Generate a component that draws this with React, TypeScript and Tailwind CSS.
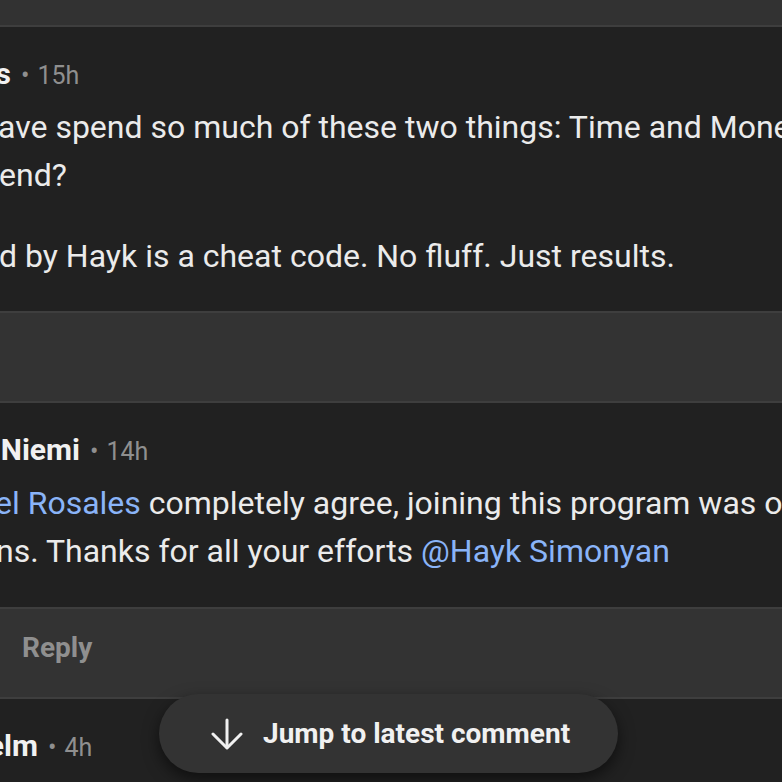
import React from 'react';

type Line = { parts: { text: string; mention?: boolean }[]; shift: string; gap?: string };

const Divider: React.FC = () => <div className="h-[2px] bg-[#3e3e3e]" />;

// the name's right edge is pinned to nameEnd; the rest of it runs off the left side
const Header: React.FC<{ name: string; time: string; nameEnd: string }> = ({ name, time, nameEnd }) => (
  <div className="flex items-baseline whitespace-nowrap h-[40px] leading-[40px] mt-[1px]">
    <span className={`flex justify-end shrink-0 ${nameEnd}`}>
      <span className="text-[30px] font-bold text-[#f1f1f1]">{name}</span>
    </span>
    <span className="text-[25px] text-[#8f8f8f] ml-[10px]">•</span>
    <span className="text-[25px] text-[#8f8f8f] ml-[8px]">{time}</span>
  </div>
);

const Comment: React.FC<{ name: string; time: string; nameEnd: string; lines: Line[]; height: string }> = ({
  name,
  time,
  nameEnd,
  lines,
  height,
}) => (
  <section className={`${height} bg-[#212121] pt-[26px] overflow-hidden`}>
    <Header name={name} time={time} nameEnd={nameEnd} />
    <div className="mt-[9px]">
      {lines.map((line, i) => (
        <p
          key={i}
          className={`whitespace-nowrap text-[32px] leading-[48px] text-[#ebebeb] ${line.shift} ${line.gap ?? ''}`}
        >
          {line.parts.map((p, j) =>
            p.mention ? (
              <span key={j} className="text-[#8ab4f8]">
                {p.text}
              </span>
            ) : (
              <span key={j}>{p.text}</span>
            )
          )}
        </p>
      ))}
    </div>
  </section>
);

const ArrowDownIcon: React.FC = () => (
  <svg width="32" height="32" viewBox="0 0 32 32" fill="none" stroke="#f1f1f1" strokeWidth="3" strokeLinecap="round" strokeLinejoin="round">
    <path d="M16 2v27" />
    <path d="M2 16l14 14 14-14" />
  </svg>
);

const App: React.FC = () => {
  return (
    <div className="relative w-[782px] h-[782px] overflow-hidden bg-[#212121] font-['Roboto','Noto_Sans',sans-serif]">
      <div className="h-[25px] bg-[#323232]" />
      <Divider />
      <Comment
        name="Daniel Rosales"
        time="15h"
        nameEnd="w-[11px]"
        height="h-[284px]"
        lines={[
          { parts: [{ text: 'ave spend so much of these two things: Time and Money' }], shift: '-ml-[2px]' },
          { parts: [{ text: 'end?' }], shift: '-ml-[1px]' },
          { parts: [{ text: 'd by Hayk is a cheat code. No fluff. Just results.' }], shift: '-ml-[1px]', gap: 'mt-[33px]' },
        ]}
      />
      <Divider />
      <div className="h-[88px] bg-[#333333]" />
      <Divider />
      <Comment
        name="Niemi"
        time="14h"
        nameEnd="w-[80px]"
        height="h-[204px]"
        lines={[
          {
            parts: [
              { text: 'el Rosales', mention: true },
              { text: ' completely agree, joining this program was one of my best decisio' },
            ],
            shift: '-ml-[5px]',
          },
          {
            parts: [{ text: 'ns. Thanks for all your efforts ' }, { text: '@Hayk Simonyan', mention: true }],
            shift: '-ml-[4px]',
          },
        ]}
      />
      <Divider />
      <div className="h-[88px] bg-[#333333] pt-[19px] pl-[22px]">
        <span className="text-[28px] leading-[40px] font-bold text-[#8f8f8f]">Reply</span>
      </div>
      <Divider />
      <Comment name="Wilhelm" time="4h" nameEnd="w-[38px]" height="h-[90px]" lines={[]} />

      <button className="absolute left-[159px] top-[694px] w-[459px] h-[79px] rounded-full bg-[#333333] shadow-[0_6px_16px_rgba(0,0,0,0.55)] flex items-center pl-[52px] gap-[20px]">
        <ArrowDownIcon />
        <span className="text-[28px] font-bold text-[#f1f1f1] whitespace-nowrap">Jump to latest comment</span>
      </button>
    </div>
  );
};

export default App;
